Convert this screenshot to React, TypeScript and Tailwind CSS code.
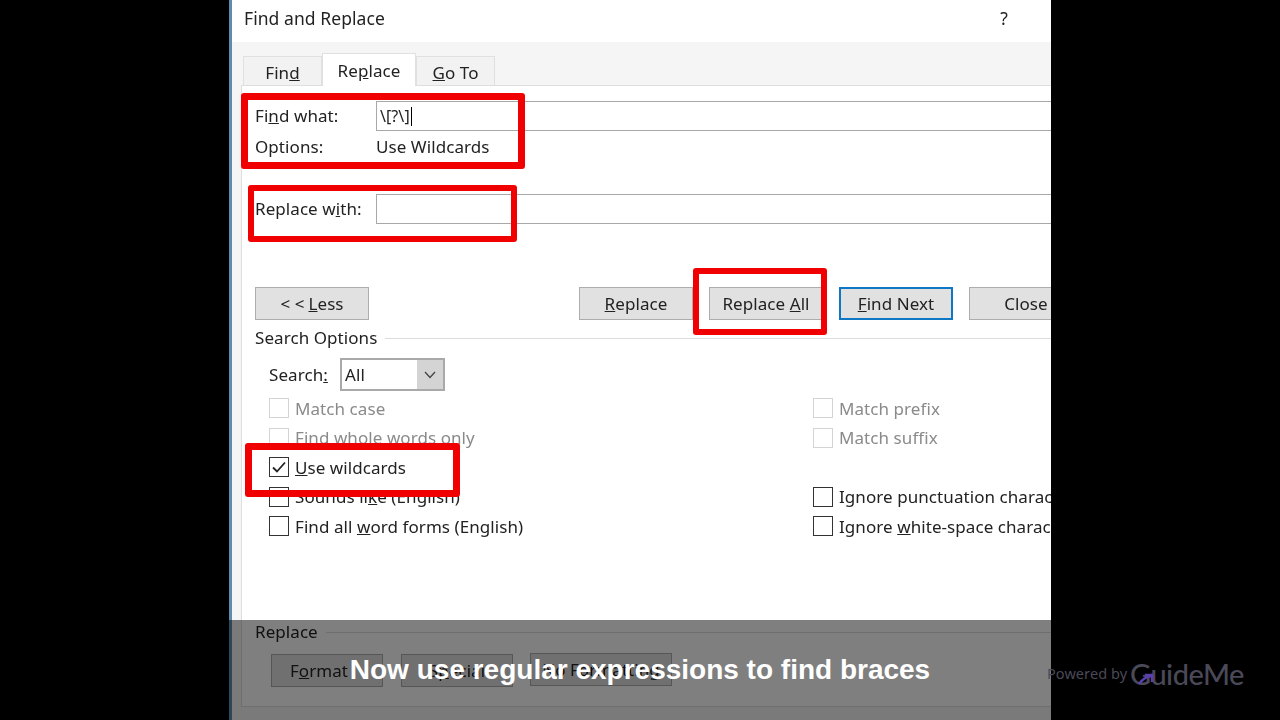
const Box = ({ checked, off }: { checked?: boolean; off?: boolean }) => (
  <span className={`flex h-5 w-5 shrink-0 items-center justify-center border bg-white ${off ? "border-[#d4d4d4]" : "border-[#333]"}`}>
    {checked && (
      <svg width="16" height="16" viewBox="0 0 16 16" fill="none" stroke="#222" strokeWidth="1.8">
        <path d="M2 8.5 L6 12.5 L14 3.5" />
      </svg>
    )}
  </span>
);

const Check = ({ children, checked, off }: { children: React.ReactNode; checked?: boolean; off?: boolean }) => (
  <div className={`flex h-[29.5px] items-center gap-[6px] whitespace-nowrap ${off ? "text-[#8a8a8a]" : ""}`}>
    <Box checked={checked} off={off} />
    <span>{children}</span>
  </div>
);

const Btn = ({ children, w, cls }: { children: React.ReactNode; w: string; cls?: string }) => (
  <div className={`flex h-[33px] shrink-0 items-center justify-center bg-[#e1e1e1] ${w} ${cls ?? "border border-[#adadad]"}`}>
    {children}
  </div>
);

const Tab = ({ children, active }: { children: React.ReactNode; active?: boolean }) =>
  active ? (
    <div className="z-10 -mb-px flex h-[33px] w-[94px] items-center justify-center border border-b-0 border-[#e0e0e0] bg-white pt-[2px]">{children}</div>
  ) : (
    <div className="flex h-[29px] w-[79px] items-center justify-center border border-b-0 border-[#e0e0e0] bg-[#f2f2f2] pt-[3px]">{children}</div>
  );

export default function App() {
  return (
    <div className="relative h-[720px] w-[1280px] overflow-hidden bg-black font-['Noto_Sans',sans-serif] text-[17px] tracking-[0.07px] text-[#222]">
      {/* dialog, cut off by the video frame */}
      <div className="ml-[229px] flex h-[720px] w-[822px] flex-col overflow-hidden border-l-[3px] border-[#5d8cae] bg-white blur-[0.4px]">
        <div className="flex h-[36px] shrink-0 items-center justify-between pl-3 pr-[43px] text-[17.5px]">
          <span>Find and Replace</span>
          <span>?</span>
        </div>
        <div className="h-[6px] shrink-0" />
        <div className="flex flex-1 flex-col bg-[#f5f5f5] pl-[9px]">
          <div className="flex h-[43px] shrink-0 items-end pl-[2px]">
            <Tab>Fin<u>d</u></Tab>
            <Tab active>Re<u>p</u>lace</Tab>
            <Tab><u>G</u>o To</Tab>
          </div>
          <div className="flex h-[622px] w-[900px] shrink-0 flex-col border border-[#dedede] bg-white pl-[13px] pt-[15px]">
            <div className="flex h-[30px] items-center">
              <span className="w-[121px]">Fi<u>n</u>d what:</span>
              <div className="flex h-[30px] flex-1 items-center border border-[#a8a8a8] pl-[3px] text-[16px]">
                \[?\]<span className="ml-px h-[19px] w-px bg-black" />
              </div>
            </div>
            <div className="flex h-[32px] items-center">
              <span className="w-[121px]">Options:</span>
              <span>Use Wildcards</span>
            </div>
            <div className="mt-[31px] flex h-[30px] items-center">
              <span className="w-[121px]">Replace w<u>i</u>th:</span>
              <div className="h-[30px] flex-1 border border-[#a8a8a8]" />
            </div>
            <div className="mt-[63px] flex h-[33px]">
              <Btn w="w-[114px]">&lt; &lt; <u className="ml-1">L</u>ess</Btn>
              <div className="ml-[210px] flex gap-4">
                <Btn w="w-[114px]"><span><u>R</u>eplace</span></Btn>
                <Btn w="w-[114px]"><span>Replace <u>A</u>ll</span></Btn>
                <Btn w="w-[114px]" cls="border-2 border-[#0f78c4]"><span><u>F</u>ind Next</span></Btn>
                <Btn w="w-[114px]">Close</Btn>
              </div>
            </div>
            <div className="flex h-[36px] items-center gap-2">
              <span>Search Options</span>
              <div className="h-px flex-1 bg-[#dcdcdc]" />
            </div>
            <div className="mt-[2px] flex h-[33px] items-center pl-[14px]">
              <span className="w-[71px]">Search<u>:</u></span>
              <div className="flex h-[33px] w-[105px] border-2 border-[#a9a9a9]">
                <span className="flex-1 pl-[3px] leading-[29px]">All</span>
                <span className="flex w-[26px] items-center justify-center bg-[#d4d4d4]">
                  <svg width="12" height="8" viewBox="0 0 12 8" fill="none" stroke="#444" strokeWidth="1.3">
                    <path d="M1 1 L6 6.5 L11 1" />
                  </svg>
                </span>
              </div>
            </div>
            <div className="mt-[2.5px] grid grid-cols-[544px_1fr] pl-[14px]">
              <Check off>Match case</Check>
              <Check off>Match prefix</Check>
              <Check off>Find whole words only</Check>
              <Check off>Match suffix</Check>
              <Check checked><u>U</u>se wildcards</Check>
              <div />
              <Check>Sounds li<u>k</u>e (English)</Check>
              <Check>Ignore punctuation characters</Check>
              <Check>Find all <u>w</u>ord forms (English)</Check>
              <Check>Ignore <u>w</u>hite-space characters</Check>
            </div>
            <div className="mt-[80px] flex h-[22px] items-center gap-2">
              <span>Replace</span>
              <div className="h-px flex-1 bg-[#dcdcdc]" />
            </div>
            <div className="mt-[11px] flex items-start pl-[16px]">
              <Btn w="w-[112px]"><span className="pr-4">F<u>o</u>rmat</span></Btn>
              <Btn w="w-[112px]" cls="ml-[18px] border border-[#adadad]"><span>S<u>p</u>ecial</span></Btn>
              <Btn w="w-[142px]" cls="ml-[17px] -mt-[1px] border border-[#adadad]">No Formatting</Btn>
            </div>
          </div>
        </div>
      </div>

      {/* red highlight boxes */}
      <div className="absolute left-[241px] top-[93px] h-[76px] w-[284px] rounded-[3px] border-[7px] border-[#f00000]" />
      <div className="absolute left-[248px] top-[185px] h-[57px] w-[269px] rounded-[3px] border-[6px] border-[#f00000]" />
      <div className="absolute left-[693px] top-[268px] h-[67px] w-[134px] rounded-[3px] border-[6px] border-[#f00000]" />
      <div className="absolute left-[245px] top-[443px] h-[54px] w-[215px] rounded-[3px] border-[7px] border-[#f00000]" />

      {/* caption bar */}
      <div className="absolute inset-x-0 bottom-0 flex h-[100px] justify-center bg-black/50 pt-[33px] font-['Liberation_Sans',sans-serif] text-[28px] font-bold leading-[34px] tracking-normal text-white">
        Now use regular expressions to find braces
      </div>

      {/* watermark */}
      <div className="absolute left-[1047px] top-[658px] flex h-[32px] items-center whitespace-nowrap text-[#4a4958]">
        <span className="w-[83px] text-[14.5px]">Powered by</span>
        <span className="relative font-['Lato',sans-serif] text-[29px] font-medium leading-[32px] tracking-[-0.5px]">
          GuideMe
          <svg className="absolute left-[8px] top-[14px]" width="16" height="14" viewBox="0 0 16 14" fill="none" stroke="#5b3fb0" strokeWidth="2.5">
            <path d="M1 12 Q6 5 13 4 M7 3 H14 V10" />
          </svg>
        </span>
      </div>
    </div>
  );
}
